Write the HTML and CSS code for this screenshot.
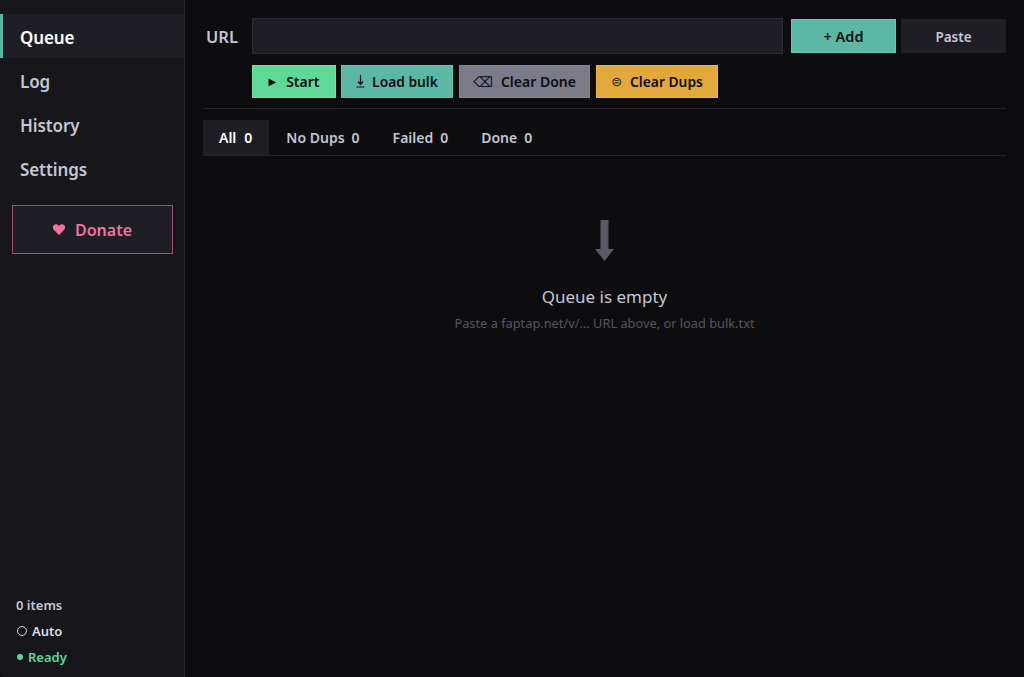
FILE: index.html
```html
<!DOCTYPE html>
<html lang="en">
<head>
<meta charset="utf-8">
<title>Queue</title>
<link rel="stylesheet" href="styles.css">
</head>
<body>
<div class="app">
  <aside class="sidebar">
    <nav class="nav">
      <a class="nav-item active">Queue</a>
      <a class="nav-item">Log</a>
      <a class="nav-item">History</a>
      <a class="nav-item">Settings</a>
    </nav>
    <button class="donate"><svg class="heart" width="12" height="11" viewBox="0 0 12 11"><path d="M6 11 1 6C-.5 4.300-.3 2 1 .9 2.500-.3 4.700 0 6 2 7.300 0 9.500-.3 11 .9c1.300 1.100 1.500 3.400 0 5.100z" fill="#f0749f"/></svg><span>Donate</span></button>
    <div class="status">
      <div class="status-line">0 items</div>
      <div class="status-line auto"><span class="ring"></span>Auto</div>
      <div class="status-line ready"><span class="dot"></span>Ready</div>
    </div>
  </aside>
  <main class="main">
    <div class="url-row">
      <label class="url-label">URL</label>
      <input class="url-input" type="text">
      <button class="btn btn-add">+ Add</button>
      <button class="btn btn-paste">Paste</button>
    </div>
    <div class="action-row">
      <button class="btn btn-start"><span class="ic ic-play">▶</span>Start</button>
      <button class="btn btn-load"><svg class="ic-svg" width="9" height="13" viewBox="0 0 9 13"><path d="M4.500 0v9M2 6.500l2.500 3 2.500-3M.5 12h8" fill="none" stroke="#0e0e11" stroke-width="1.200"/></svg>Load bulk</button>
      <button class="btn btn-clear"><span class="ic ic-back">⌫</span>Clear Done</button>
      <button class="btn btn-dups"><span class="ic ic-dups">⊜</span>Clear Dups</button>
    </div>
    <div class="tabs">
      <div class="tab active">All<span class="count">0</span></div>
      <div class="tab">No Dups<span class="count">0</span></div>
      <div class="tab">Failed<span class="count">0</span></div>
      <div class="tab">Done<span class="count">0</span></div>
    </div>
    <div class="empty">
      <svg class="empty-icon" width="19" height="41" viewBox="0 0 19 41"><path d="M5.500 0h8v29H19L9.500 41 0 29h5.500z" fill="#5a5a64"/></svg>
      <div class="empty-title">Queue is empty</div>
      <div class="empty-sub">Paste a faptap.net/v/... URL above, or load bulk.txt</div>
    </div>
  </main>
</div>
</body>
</html>
```
FILE: styles.css
```css
* { box-sizing: border-box; }
html, body { margin: 0; height: 100%; background: #0d0d10; }
body { font-family: "Noto Sans", "Open Sans", "Liberation Sans", sans-serif; overflow: hidden; }
.app { display: flex; height: 677px; }

.sidebar { width: 185px; flex: none; background: #16161b; border-right: 1px solid #2a2a30; display: flex; flex-direction: column; padding-top: 14px; border-bottom-left-radius: 6px; }
.nav { display: flex; flex-direction: column; }
.nav-item { height: 44px; display: flex; align-items: center; padding: 2px 0 0 20px; font-size: 17px; font-weight: 600; color: #c4c6d4; letter-spacing: -0.1px; }
.nav-item.active { background: #1e1e24; color: #fff; box-shadow: inset 3px 0 0 #5bb8a5; }
.donate { margin: 15px 12px 0; width: 161px; height: 49px; background: #1e1e24; border: 1px solid #a84f73; color: #f0749f; font: 600 16px "Noto Sans", sans-serif; display: flex; align-items: center; justify-content: center; gap: 10px; padding: 0; }
.status { margin-top: auto; padding: 0 0 7px 16px; display: flex; flex-direction: column; }
.status-line { height: 26px; display: flex; align-items: center; font-size: 13px; font-weight: 600; color: #c4c6d4; }
.auto { color: #dcdde6; }
.ring { width: 10px; height: 10px; border: 1px solid #d8d9e2; border-radius: 50%; margin: 0 5px 0 1px; }
.ready { color: #5fd898; }
.dot { width: 6px; height: 6px; background: #5fd898; border-radius: 50%; margin: 0 5px 0 1px; }

.main { flex: 1; padding: 18px 18px 0; display: flex; flex-direction: column; min-width: 0; }
.url-row { display: flex; align-items: center; height: 36px; }
.url-label { width: 49px; padding-left: 3px; font-size: 16.500px; font-weight: 600; color: #c4c6d4; flex: none; }
.url-input { width: 531px; height: 36px; background: #1e1e24; border: 1px solid #2e2e36; outline: none; flex: none; }
.btn { height: 34px; border: 1px solid transparent; font: 600 14px "Noto Sans", sans-serif; color: #0e0e11; display: flex; align-items: center; justify-content: center; padding: 0; flex: none; }
.btn-add { width: 105px; margin-left: 8px; background: #5bb8a5; border-color: #66c6b2; font-size: 14.500px; }
.btn-paste { width: 105px; margin-left: 5px; background: #1e1e24; color: #c4c6d4; font-size: 13.500px; padding-top: 1px; }
.action-row { display: flex; gap: 5px; margin: 11px 0 0 49px; }
.action-row .btn { height: 33px; }
.ic { margin-right: 8px; font-size: 12px; font-family: "DejaVu Sans", sans-serif; font-weight: 400; }
.ic-play { font-size: 10px; margin-right: 10px; }
.ic-back { font-size: 14px; }
.ic-dups { font-size: 13px; }
.ic-svg { margin-right: 7px; }
.btn-start { width: 84px; background: #5fd898; border-color: #6ee3a4; }
.btn-load { width: 112px; background: #5bb8a5; border-color: #66c6b2; font-size: 13.800px; }
.btn-clear { width: 131px; margin-left: 1px; background: #7a7a88; border-color: #858593; }
.btn-dups { width: 122px; margin-left: 1px; background: #e3a83b; border-color: #f0b548; font-size: 13.800px; }
.tabs { display: flex; margin-top: 10px; border-top: 1px solid #24242a; border-bottom: 1px solid #24242a; padding-top: 11px; height: 48px; }
.tab { height: 35px; padding: 0 16px 0 17px; display: flex; align-items: center; font-size: 14px; font-weight: 600; color: #c4c6d4; }
.tab.active { background: #1e1e24; color: #fff; padding: 0 17px 0 16px; }
.count { margin-left: 7px; }
.tab.active .count { margin-left: 8px; }

.empty { display: flex; flex-direction: column; align-items: center; padding-top: 64px; }
.empty-title { margin-top: 24px; font-size: 17px; line-height: 24px; color: #c4c6d4; }
.empty-sub { margin-top: 5px; font-size: 12.800px; line-height: 18px; color: #55555f; }
```
